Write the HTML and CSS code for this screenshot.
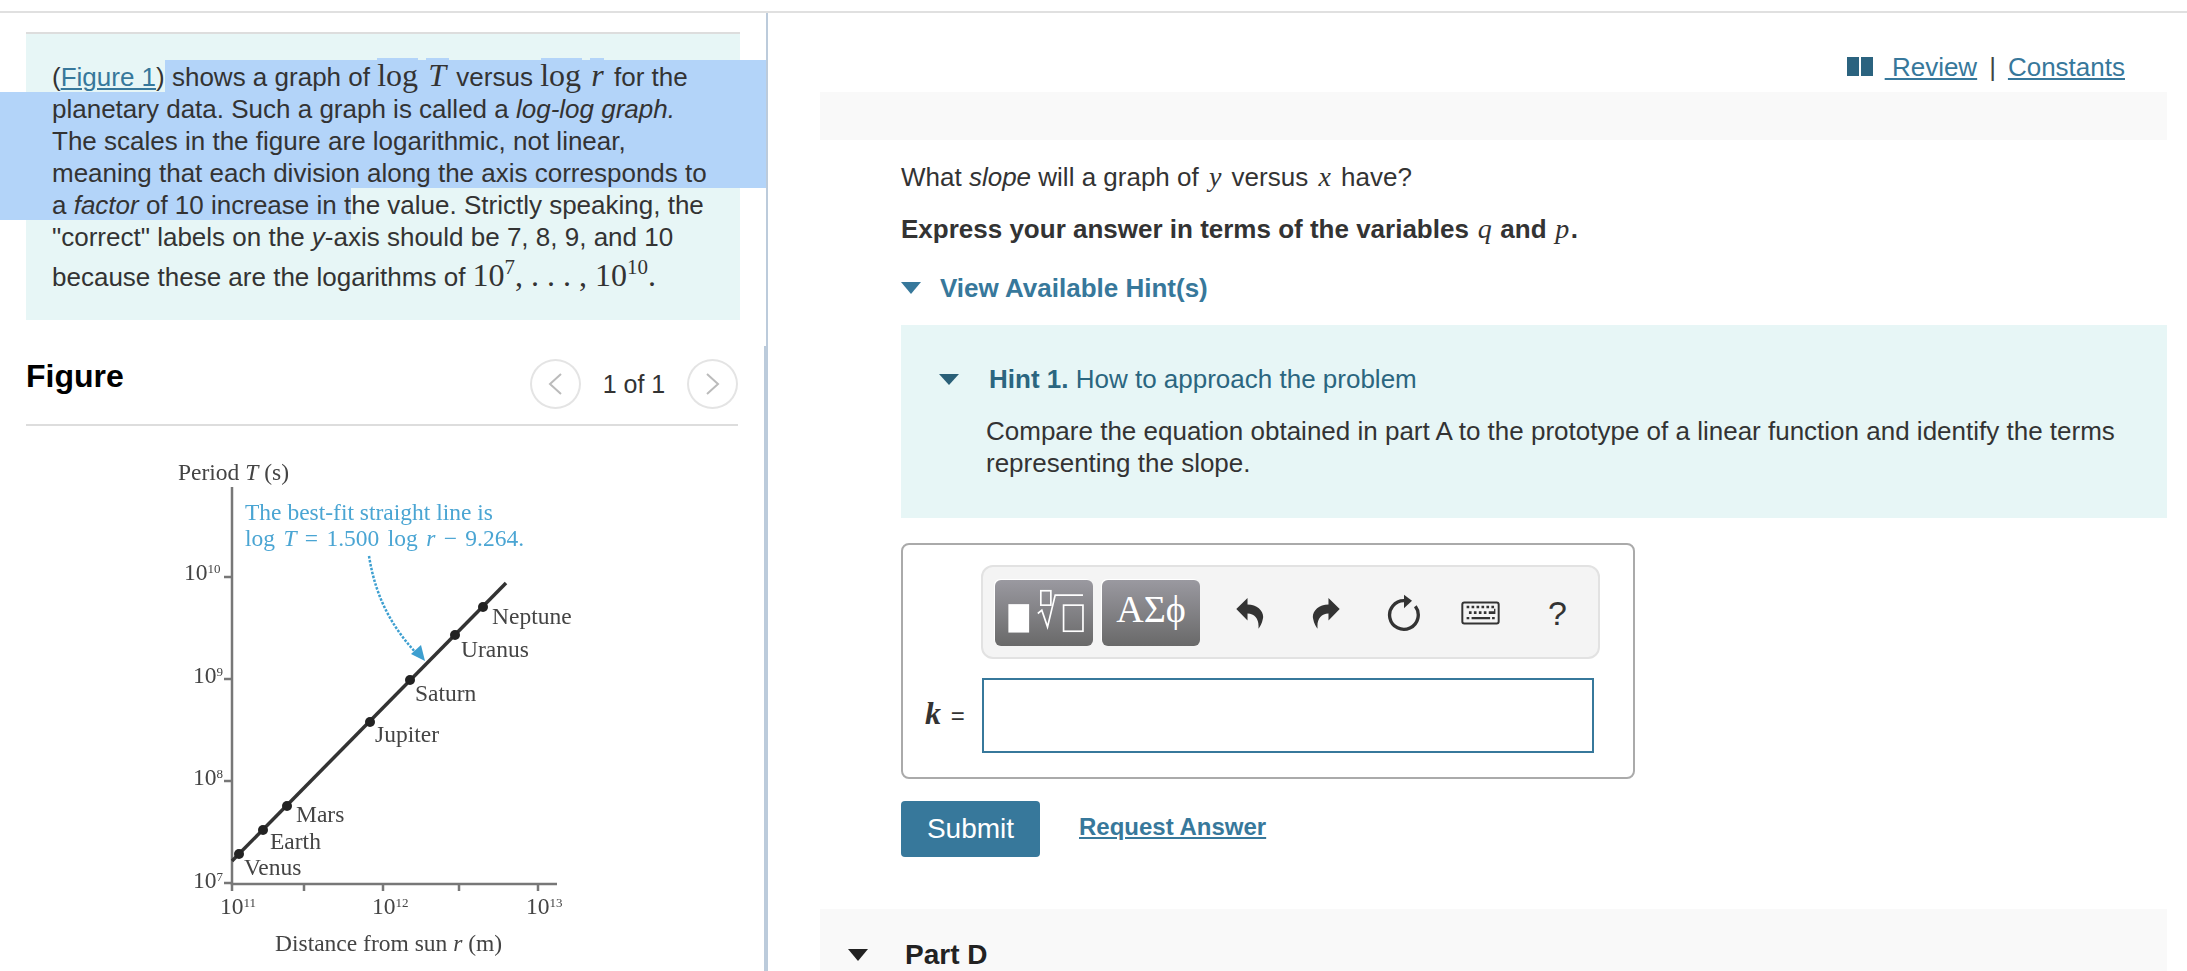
FILE: index.html
```html
<!DOCTYPE html>
<html lang="en">
<head>
    <meta charset="UTF-8">
    <title>Part C - Planetary data</title>
    <link rel="stylesheet" href="styles.css">
</head>
<body>
    <div class="topbar"></div>
    <div class="page">
        <div class="col-left">
            <div class="intro-pane">
                <div class="intro">
                    <div class="sel sel-first"></div>
                    <div class="sel sel-mid"></div>
                    <div class="sel sel-last"></div>
                    <div class="sel sel-log1"></div>
                    <div class="sel sel-t"></div>
                    <div class="sel sel-log2"></div>
                    <div class="sel sel-r"></div>
                    <p class="intro-text">(<a href="#" class="link">Figure 1</a>) shows a graph of <span class="math">log</span> <span class="math var">T</span> versus <span class="math">log</span> <span class="math var">r</span> for the planetary data. Such a graph is called a <em>log-log graph.</em> The scales in the figure are logarithmic, not linear, meaning that each division along the axis corresponds to a <em>factor</em> of 10 increase in the value. Strictly speaking, the "correct" labels on the <em>y</em>-axis should be 7, 8, 9, and 10 <span class="last-line">because these are the logarithms of <span class="math">10<sup>7</sup>, . . . , 10<sup>10</sup>.</span></span></p>
                </div>
            </div>
            <div class="figure-pane">
                <div class="figure-head">
                    <h2 class="figure-title">Figure</h2>
                    <div class="pager">
                        <button class="pager-btn">
                            <svg width="15" height="24" viewBox="0 0 15 24"><path d="M13 2 L2 12 L13 22" fill="none" stroke="#bbb" stroke-width="2"/></svg>
                        </button>
                        <span class="pager-label">1 of 1</span>
                        <button class="pager-btn">
                            <svg width="15" height="24" viewBox="0 0 15 24"><path d="M2 2 L13 12 L2 22" fill="none" stroke="#bbb" stroke-width="2"/></svg>
                        </button>
                    </div>
                </div>
                <svg class="graph" width="762" height="545" viewBox="0 426 762 545">
                    <g stroke="#777" stroke-width="2.5" fill="none">
                        <path d="M232 487 V884 H557"/>
                        <path d="M224 577 H232 M224 679 H232 M224 781 H232 M224 883 H232"/>
                        <path d="M232 883 V891 M304 883 V891 M383 883 V891 M459 883 V891 M538 883 V891"/>
                    </g>
                    <path d="M232 861 L506 583" stroke="#333" stroke-width="3.5" fill="none"/>
                    <g fill="#222">
                        <circle cx="239" cy="854" r="5"/>
                        <circle cx="263" cy="830" r="5"/>
                        <circle cx="287" cy="806" r="5"/>
                        <circle cx="370" cy="722" r="5"/>
                        <circle cx="410" cy="680" r="5"/>
                        <circle cx="455" cy="635" r="5"/>
                        <circle cx="483" cy="607" r="5"/>
                    </g>
                    <path d="M369 556 C376 600 394 630 419 656" stroke="#3d9fd0" stroke-width="2.5" stroke-dasharray="2.5 1.5" fill="none"/>
                    <path d="M425 661 L411 654 L421 645 Z" fill="#3d9fd0"/>
                    <g class="graph-text">
                        <text x="178" y="480">Period <tspan font-style="italic">T</tspan> (s)</text>
                        <text x="492" y="624">Neptune</text>
                        <text x="461" y="657">Uranus</text>
                        <text x="415" y="701">Saturn</text>
                        <text x="375" y="742">Jupiter</text>
                        <text x="296" y="822">Mars</text>
                        <text x="270" y="849">Earth</text>
                        <text x="244" y="875">Venus</text>
                        <text x="275" y="951">Distance from sun <tspan font-style="italic">r</tspan> (m)</text>
                        <text x="184" y="580">10<tspan class="exp" dy="-7">10</tspan></text>
                        <text x="193" y="683">10<tspan class="exp" dy="-7">9</tspan></text>
                        <text x="193" y="785">10<tspan class="exp" dy="-7">8</tspan></text>
                        <text x="193" y="888">10<tspan class="exp" dy="-7">7</tspan></text>
                        <text x="220" y="914">10<tspan class="exp" dy="-7">11</tspan></text>
                        <text x="372" y="914">10<tspan class="exp" dy="-7">12</tspan></text>
                        <text x="526" y="914">10<tspan class="exp" dy="-7">13</tspan></text>
                    </g>
                    <g class="graph-text graph-blue">
                        <text x="245" y="520">The best-fit straight line is</text>
                        <text class="graph-eq" x="245" y="546">log <tspan font-style="italic">T</tspan> = 1.500 log <tspan font-style="italic">r</tspan> &#8722; 9.264.</text>
                    </g>
                </svg>
            </div>
        </div>

        <div class="col-right">
            <div class="review-row">
                <svg class="book" width="26" height="20" viewBox="0 0 26 20"><path d="M0 0 H12 V19 H0 Z M14 0 H26 V19 H14 Z" fill="#2b637f"/></svg>
                <a href="#" class="link">&nbsp;Review</a>
                <span class="review-sep">|</span>
                <a href="#" class="link">Constants</a>
            </div>
            <div class="band"></div>
            <div class="part-body">
                <p class="line question">What <em>slope</em> will a graph of <span class="math var">y</span> versus <span class="math var">x</span> have?</p>
                <p class="line express">Express your answer in terms of the variables <span class="math var">q</span> and <span class="math var">p</span>.</p>
                <div class="hint-toggle">
                    <span class="tri tri-link"></span>
                    <span>View Available Hint(s)</span>
                </div>
                <div class="hint">
                    <div class="hint-title">
                        <span class="tri tri-hint"></span>
                        <span><b>Hint 1.</b> How to approach the problem</span>
                    </div>
                    <p class="hint-text">Compare the equation obtained in part A to the prototype of a linear function and identify the terms representing the slope.</p>
                </div>
                <div class="answer-box">
                    <div class="toolbar">
                        <button class="tool-btn">
                            <svg width="98" height="66" viewBox="15 15 293 197">
                                <rect x="55" y="87" width="62" height="85" fill="#fff"/>
                                <g fill="none" stroke="#fff" stroke-width="5">
                                    <rect x="152" y="47" width="30" height="43"/>
                                    <path d="M143 115 L155 105 L172 155 L195 60 H278"/>
                                    <rect x="220" y="90" width="58" height="78"/>
                                </g>
                            </svg>
                        </button>
                        <button class="tool-btn tool-greek">&#913;&#931;&#981;</button>
                        <span class="tool-icon tool-first">
                            <svg width="29" height="33" viewBox="735 62 86 100"><path d="M738 98 L772 65 V85 C805 85 825 110 818 130 C816 142 810 152 805 158 C808 130 795 112 772 112 V133 Z" fill="#333"/></svg>
                        </span>
                        <span class="tool-icon">
                            <svg width="29" height="33" viewBox="735 62 86 100"><path transform="matrix(-1 0 0 1 1556 0)" d="M738 98 L772 65 V85 C805 85 825 110 818 130 C816 142 810 152 805 158 C808 130 795 112 772 112 V133 Z" fill="#333"/></svg>
                        </span>
                        <span class="tool-icon">
                            <svg width="34" height="38" viewBox="287 55 102 114">
                                <path d="M338 75 A43 43 0 1 0 372 92" fill="none" stroke="#333" stroke-width="10"/>
                                <path d="M338 57 L362 75 L338 98 Z" fill="#333"/>
                            </svg>
                        </span>
                        <span class="tool-icon">
                            <svg width="39" height="24" viewBox="508 90 118 72">
                                <rect x="512" y="94" width="110" height="64" rx="6" fill="none" stroke="#333" stroke-width="6"/>
                                <path d="M525 104 h8 v8 h-8z M540 104 h8 v8 h-8z M555 104 h8 v8 h-8z M570 104 h8 v8 h-8z M585 104 h8 v8 h-8z M600 104 h8 v8 h-8z M532 121 h8 v8 h-8z M547 121 h8 v8 h-8z M562 121 h8 v8 h-8z M577 121 h8 v8 h-8z M592 121 h16 v-8 h4 v16 h-20z M525 138 h8 v7 h-8z M540 138 h56 v7 h-56z M602 138 h8 v7 h-8z" fill="#333"/>
                            </svg>
                        </span>
                        <span class="tool-icon tool-help">?</span>
                    </div>
                    <div class="answer-row">
                        <span class="answer-label"><b class="math var">k</b> =</span>
                        <input class="answer-input" type="text">
                    </div>
                </div>
                <div class="actions">
                    <button class="submit">Submit</button>
                    <a href="#" class="link request">Request Answer</a>
                </div>
            </div>
            <div class="band part-d">
                <span class="tri tri-part"></span>
                <span class="part-title">Part D</span>
            </div>
        </div>
    </div>
</body>
</html>
```

FILE: styles.css
```css
html, body {
    height: 971px;
    overflow: hidden;
}

body {
    margin: 0;
    font-family: "Liberation Sans", Arial, sans-serif;
    font-size: 26px;
    line-height: 32px;
    color: #333;
    background-color: white;
}

p {
    margin: 0;
}

.topbar {
    height: 11px;
    border-bottom: 2px solid #e0e0e0;
}

.page {
    display: flex;
}

.link {
    color: #37789b;
}

.math {
    font-family: "Liberation Serif", "Times New Roman", serif;
    font-size: 32px;
    line-height: 0;
}

.var {
    font-style: italic;
    padding: 0 3px;
}

/* left column */
.col-left {
    position: relative;
    width: 768px;
    flex-shrink: 0;
}

.intro-pane {
    height: 333px;
    box-sizing: border-box;
    padding: 19px 26px 0;
    border-right: 2px solid #bccbdb;
}

.intro {
    height: 288px;
    box-sizing: border-box;
    padding: 27px 26px 0;
    border-top: 2px solid #ddd;
    background-color: #e7f6f6;
}

.intro-text {
    position: relative;
    z-index: 1;
}

.last-line {
    display: block;
    margin-top: 8px;
}

.last-line sup {
    font-size: 21px;
    line-height: 0;
}

.sel {
    position: absolute;
    background-color: #b3d4f9;
}

.sel-first { top: 47px; left: 165px; width: 601px; height: 32px; }
.sel-mid { top: 79px; left: 0; width: 766px; height: 96px; }
.sel-last { top: 175px; left: 0; width: 351px; height: 32px; }
.sel-log1 { top: 45px; left: 377px; width: 41px; height: 36px; }
.sel-t { top: 45px; left: 426px; width: 23px; height: 36px; }
.sel-log2 { top: 45px; left: 541px; width: 41px; height: 36px; }
.sel-r { top: 45px; left: 590px; width: 14px; height: 36px; }

.figure-pane {
    height: 625px;
    box-sizing: border-box;
    border-right: 4px solid #bccbdb;
}

.figure-head {
    display: flex;
    justify-content: space-between;
    align-items: flex-start;
    margin: 0 26px;
    padding: 11px 0 15px;
    border-bottom: 2px solid #ddd;
}

.figure-title {
    margin: 0;
    font-size: 32px;
    line-height: 38px;
    color: #000;
}

.pager {
    display: flex;
    align-items: center;
    margin-top: 2px;
}

.pager-btn {
    display: flex;
    justify-content: center;
    align-items: center;
    width: 51px;
    height: 50px;
    padding: 0;
    border: 2px solid #e4e4e4;
    border-radius: 50%;
    background: none;
}

.pager-label {
    width: 106px;
    text-align: center;
    font-size: 25px;
}

.graph {
    display: block;
    filter: blur(0.5px);
}

.graph-text {
    font-family: "Liberation Serif", "Times New Roman", serif;
    font-size: 23.5px;
    fill: #444;
}

.graph-text .exp {
    font-size: 13px;
}

.graph-blue {
    fill: #4aa5d3;
}

.graph-eq {
    word-spacing: 2.5px;
}

/* right column */
.col-right {
    flex: 1;
    min-width: 0;
}

.review-row {
    display: flex;
    align-items: center;
    justify-content: flex-end;
    height: 32px;
    padding: 38px 62px 9px 0;
}

.book {
    margin-right: 12px;
}

.review-sep {
    margin: 0 12px;
    color: #444;
}

.band {
    height: 48px;
    margin: 0 20px 0 52px;
    background-color: #f9f9f9;
}

.part-body {
    margin: 21px 20px 0 133px;
}

.line {
    margin-bottom: 20px;
}

.line .math {
    font-size: 28px;
}

.express {
    font-weight: bold;
    margin-bottom: 27px;
}

.express .math {
    font-weight: normal;
    padding: 0 1.5px;
}

.hint-toggle {
    display: flex;
    align-items: center;
    font-weight: bold;
    color: #37789b;
}

.tri {
    width: 0;
    height: 0;
    flex-shrink: 0;
    border-left: 10px solid transparent;
    border-right: 10px solid transparent;
}

.tri-link {
    margin-right: 19px;
    border-top: 12px solid #37789b;
}

.hint {
    margin-top: 21px;
    padding: 38px 38px 39px 38px;
    background-color: #e7f6f6;
}

.hint-title {
    display: flex;
    align-items: center;
    color: #2b6680;
}

.tri-hint {
    margin-right: 30px;
    border-top: 11px solid #2a6078;
}

.hint-text {
    margin: 20px 0 0 47px;
}

.answer-box {
    width: 734px;
    height: 236px;
    box-sizing: border-box;
    margin-top: 25px;
    padding-top: 20px;
    border: 2px solid #aaa;
    border-radius: 8px;
}

.toolbar {
    display: flex;
    align-items: flex-start;
    gap: 9px;
    width: 619px;
    height: 94px;
    box-sizing: border-box;
    margin-left: 78px;
    padding: 13px 0 13px 12px;
    border: 2px solid #e2e2e2;
    border-radius: 12px;
    background-color: #f4f4f4;
}

.tool-btn {
    width: 98px;
    height: 66px;
    flex-shrink: 0;
    padding: 0;
    border: none;
    border-radius: 6px;
    box-shadow: -1px -1px 0 white;
    background: linear-gradient(#9a99a0, #696969);
    color: white;
}

.tool-btn svg {
    display: block;
}

.tool-greek {
    font-family: "Liberation Serif", "DejaVu Serif", serif;
    font-size: 38px;
    line-height: 56px;
    padding-bottom: 8px;
}

.tool-icon {
    display: flex;
    justify-content: center;
    align-items: center;
    width: 77px;
    height: 66px;
    flex-shrink: 0;
    margin-left: -9px;
}

.tool-first {
    margin-left: 2px;
}

.tool-help {
    font-size: 34px;
}

.answer-row {
    display: flex;
    align-items: center;
    margin-top: 19px;
    padding-left: 19px;
}

.answer-label {
    width: 60px;
    flex-shrink: 0;
    font-size: 24px;
}

.answer-input {
    width: 612px;
    height: 75px;
    box-sizing: border-box;
    padding: 0;
    border: 2px solid #37789b;
    background: white;
}

.actions {
    display: flex;
    align-items: center;
    gap: 39px;
    margin-top: 22px;
}

.submit {
    width: 139px;
    height: 56px;
    padding: 0;
    border: none;
    border-radius: 4px;
    background-color: #37789b;
    color: white;
    font-family: inherit;
    font-size: 28px;
}

.request {
    font-size: 24px;
    font-weight: bold;
    margin-bottom: 4px;
}

.part-d {
    display: flex;
    align-items: center;
    height: 62px;
    margin-top: 52px;
    padding: 30px 0 0 28px;
    box-sizing: border-box;
}

.tri-part {
    margin-right: 37px;
    border-top: 12px solid #222;
}

.part-title {
    font-size: 28px;
    font-weight: bold;
    color: #222;
}
```
